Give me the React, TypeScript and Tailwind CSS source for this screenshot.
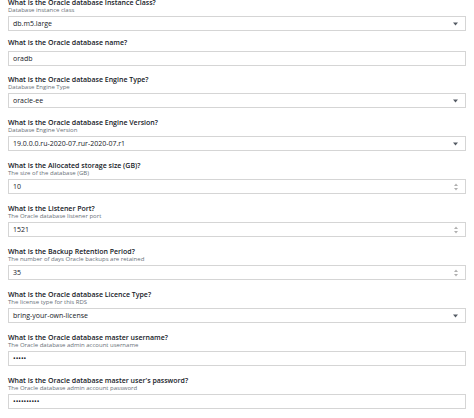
import React from 'react';

type Field = {
  title: string;
  hint?: string;
  value: string;
  kind: 'text' | 'select' | 'number';
  gap?: string;
};

const fields: Field[] = [
  { title: 'What is the Oracle database Instance Class?', hint: 'Database instance class', value: 'db.m5.large', kind: 'select', gap: 'mb-[8px]' },
  { title: 'What is the Oracle database name?', value: 'oradb', kind: 'text', gap: 'mb-[10px]' },
  { title: 'What is the Oracle database Engine Type?', hint: 'Database Engine Type', value: 'oracle-ee', kind: 'select' },
  { title: 'What is the Oracle database Engine Version?', hint: 'Database Engine Version', value: '19.0.0.0.ru-2020-07.rur-2020-07.r1', kind: 'select' },
  { title: 'What is the Allocated storage size (GB)?', hint: 'The size of the database (GB)', value: '10', kind: 'number' },
  { title: 'What is the Listener Port?', hint: 'The Oracle database listener port', value: '1521', kind: 'number' },
  { title: 'What is the Backup Retention Period?', hint: 'The number of days Oracle backups are retained', value: '35', kind: 'number' },
  { title: 'What is the Oracle database Licence Type?', hint: 'The license type for this RDS', value: 'bring-your-own-license', kind: 'select' },
  { title: 'What is the Oracle database master username?', hint: 'The Oracle database admin account username', value: '•••••', kind: 'text' },
  { title: "What is the Oracle database master user's password?", hint: 'The Oracle database admin account password', value: '••••••••••', kind: 'text' },
];

function Caret() {
  return (
    <svg width="5" height="4" viewBox="0 0 5 4" className="shrink-0">
      <path d="M0 0.5 L5 0.5 L2.5 3.5 Z" fill="#545b64" />
    </svg>
  );
}

function Spinner() {
  return (
    <svg width="4" height="8" viewBox="0 0 4 8" className="shrink-0">
      <path d="M0 3 L4 3 L2 0.5 Z" fill="#b0b0b0" />
      <path d="M0 5 L4 5 L2 7.5 Z" fill="#b0b0b0" />
    </svg>
  );
}

function FormField({ field }: { field: Field }) {
  return (
    <div className={`flex flex-col ${field.gap ?? 'mb-[11px]'}`}>
      <div className="text-[7px] leading-[8px] font-semibold text-[#16191f]">{field.title}</div>
      {field.hint && (
        <div className="text-[6px] leading-[7px] text-[#687078]">{field.hint}</div>
      )}
      <div
        className={`flex items-center justify-between h-[15px] border border-[#d5d5d5] bg-white pl-[4px] pr-[7px] ${
          field.hint ? 'mt-[2px]' : 'mt-[4px]'
        }`}
      >
        <span className="text-[7px] leading-none text-[#16191f]">{field.value}</span>
        {field.kind === 'select' && <Caret />}
        {field.kind === 'number' && <Spinner />}
      </div>
    </div>
  );
}

export default function App() {
  return (
    <div
      className="w-[474px] h-[418px] overflow-hidden bg-white px-2"
      style={{ fontFamily: '"Open Sans", "Noto Sans", sans-serif' }}
    >
      <div className="-mt-[1px]">
        {fields.map((f) => (
          <FormField key={f.title} field={f} />
        ))}
      </div>
    </div>
  );
}
